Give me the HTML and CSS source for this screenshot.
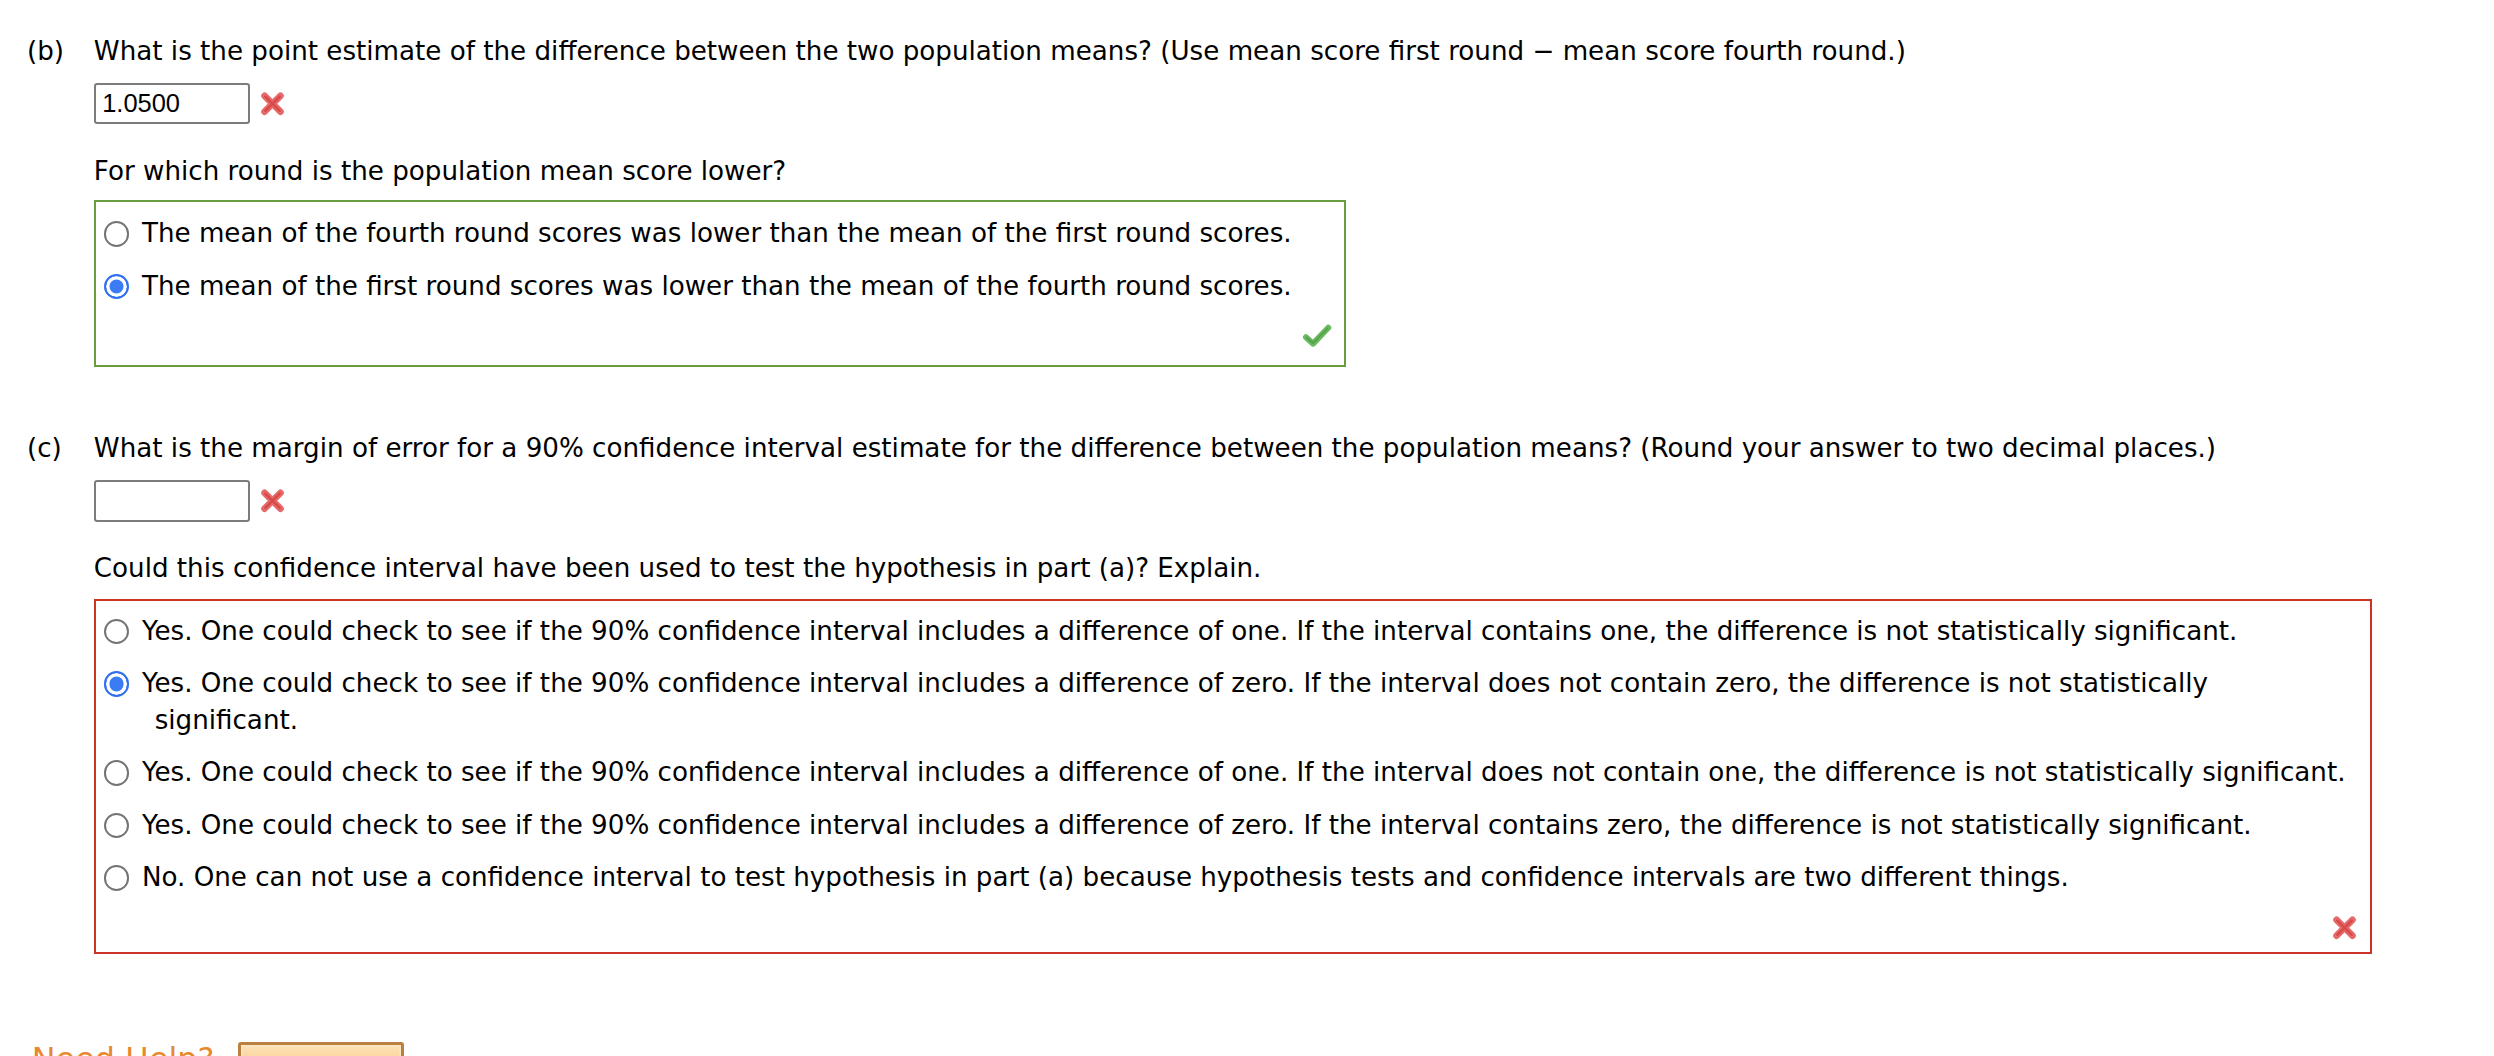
FILE: index.html
```html
<!DOCTYPE html>
<html lang="en">
<head>
<meta charset="utf-8">
<title>Question</title>
<link rel="stylesheet" href="styles.css">
</head>
<body>
<div class="page">
  <section class="part">
    <div class="part-label">(b)</div>
    <div class="part-body">
      <p class="question">What is the point estimate of the difference between the two population means? (Use mean score first round &minus; mean score fourth round.)</p>
      <div class="answer-row">
        <input class="num-input" type="text" value="1.0500">
        <svg class="icon-x" viewBox="0 0 17 16" width="17" height="16" aria-hidden="true"><path d="M3.5 3 L13.5 13 M13.5 3 L3.5 13" stroke="#e66a6a" stroke-width="4.2" stroke-linecap="round" fill="none"/><path d="M4 3.5 L13 12.5 M13 3.5 L4 12.5" stroke="#d84a4a" stroke-width="1.6" stroke-linecap="round" fill="none"/></svg>
      </div>
      <p class="question">For which round is the population mean score lower?</p>
      <div class="choice-box correct">
        <label class="choice"><input type="radio" name="b2">The mean of the fourth round scores was lower than the mean of the first round scores.</label>
        <label class="choice"><input type="radio" name="b2" checked>The mean of the first round scores was lower than the mean of the fourth round scores.</label>
        <div class="mark-row">
          <svg class="icon-check" viewBox="0 0 19 16" width="19" height="16" aria-hidden="true"><path d="M2.5 9 L7 13 L16.5 3" stroke="#6cbb62" stroke-width="3.8" stroke-linecap="round" stroke-linejoin="round" fill="none"/><path d="M3 9.3 L7 12.6 L16 3.4" stroke="#57a34e" stroke-width="1.4" stroke-linecap="round" stroke-linejoin="round" fill="none"/></svg>
        </div>
      </div>
    </div>
  </section>

  <section class="part">
    <div class="part-label">(c)</div>
    <div class="part-body">
      <p class="question">What is the margin of error for a 90% confidence interval estimate for the difference between the population means? (Round your answer to two decimal places.)</p>
      <div class="answer-row">
        <input class="num-input" type="text" value="">
        <svg class="icon-x" viewBox="0 0 17 16" width="17" height="16" aria-hidden="true"><path d="M3.5 3 L13.5 13 M13.5 3 L3.5 13" stroke="#e66a6a" stroke-width="4.2" stroke-linecap="round" fill="none"/><path d="M4 3.5 L13 12.5 M13 3.5 L4 12.5" stroke="#d84a4a" stroke-width="1.6" stroke-linecap="round" fill="none"/></svg>
      </div>
      <p class="question">Could this confidence interval have been used to test the hypothesis in part (a)? Explain.</p>
      <div class="choice-box incorrect">
        <label class="choice"><input type="radio" name="c2">Yes. One could check to see if the 90% confidence interval includes a difference of one. If the interval contains one, the difference is not statistically significant.</label>
        <label class="choice"><input type="radio" name="c2" checked>Yes. One could check to see if the 90% confidence interval includes a difference of zero. If the interval does not contain zero, the difference is not statistically significant.</label>
        <label class="choice"><input type="radio" name="c2">Yes. One could check to see if the 90% confidence interval includes a difference of one. If the interval does not contain one, the difference is not statistically significant.</label>
        <label class="choice"><input type="radio" name="c2">Yes. One could check to see if the 90% confidence interval includes a difference of zero. If the interval contains zero, the difference is not statistically significant.</label>
        <label class="choice"><input type="radio" name="c2">No. One can not use a confidence interval to test hypothesis in part (a) because hypothesis tests and confidence intervals are two different things.</label>
        <div class="mark-row">
          <svg class="icon-x" viewBox="0 0 17 16" width="17" height="16" aria-hidden="true"><path d="M3.5 3 L13.5 13 M13.5 3 L3.5 13" stroke="#e66a6a" stroke-width="4.2" stroke-linecap="round" fill="none"/><path d="M4 3.5 L13 12.5 M13 3.5 L4 12.5" stroke="#d84a4a" stroke-width="1.6" stroke-linecap="round" fill="none"/></svg>
        </div>
      </div>
    </div>
  </section>

  <div class="help">
    <span class="need-help">Need Help?</span>
    <button class="read-it" type="button">Read It</button>
  </div>
</div>
</body>
</html>
```

FILE: styles.css
```css
html, body {
  margin: 0;
  padding: 0;
  background: #ffffff;
  overflow: hidden;
}

.page {
  zoom: 1.5906;
  padding: 20.5px 0 0 17px;
  font-family: "DejaVu Sans", Verdana, sans-serif;
  font-size: 16.45px;
  line-height: 23px;
  color: #000000;
}

.part {
  display: grid;
  grid-template-columns: 42px auto;
}

.part + .part {
  margin-top: 39.5px;
}

.part-label {
  line-height: 23px;
}

.question {
  margin: 0;
}

.answer-row {
  display: flex;
  align-items: center;
  gap: 6px;
  margin: 8.5px 0 18px;
}

.num-input {
  box-sizing: border-box;
  width: 98px;
  height: 26px;
  margin: 0;
  border: 1.26px solid #7c7c7c;
  border-radius: 2px;
  padding: 0 4px;
  font-family: "Liberation Sans", Arial, sans-serif;
  font-size: 16px;
  color: #000000;
  background: #ffffff;
}

.icon-x,
.icon-check {
  display: block;
}

.choice-box {
  box-sizing: border-box;
  border: 1.26px solid;
  padding: 8.5px 11px 8.5px 5px;
}

.choice-box.correct {
  margin-top: 6.5px;
  border-color: #6a9b3e;
  width: 787px;
}

.choice-box.incorrect {
  margin-top: 7.5px;
  border-color: #cc3526;
  width: 1432px;
  padding-top: 7.5px;
  padding-bottom: 5.5px;
}

.choice {
  display: block;
  padding-left: 32px;
  text-indent: -32px;
  margin-bottom: 10px;
}

.choice input {
  appearance: none;
  -webkit-appearance: none;
  box-sizing: border-box;
  width: 16px;
  height: 16px;
  margin: 0 8px 0 0;
  border: 1.26px solid #747474;
  border-radius: 50%;
  background: #ffffff;
  vertical-align: -3px;
}

.choice input:checked {
  border: 1.5px solid #2f6ff0;
  background: #3b7cf5;
  box-shadow: inset 0 0 0 2.2px #ffffff;
}

.mark-row {
  display: flex;
  justify-content: flex-end;
  align-items: center;
  height: 20px;
  margin-right: -4px;
}

.help {
  display: flex;
  align-items: flex-start;
  gap: 15px;
  margin-top: 55px;
  margin-left: 3px;
}

.need-help {
  margin-top: -1px;
  font-size: 20px;
  line-height: 24px;
  color: #e8892e;
}

.read-it {
  box-sizing: border-box;
  width: 104px;
  height: 30px;
  border: 2px solid #b9803f;
  border-radius: 2px;
  box-shadow: inset 0 0 0 1px #fbe6c4;
  background: linear-gradient(#fde2b6, #f4bd72);
  font-family: "DejaVu Sans", Verdana, sans-serif;
  font-size: 13px;
  font-weight: bold;
  color: #333333;
}
```
